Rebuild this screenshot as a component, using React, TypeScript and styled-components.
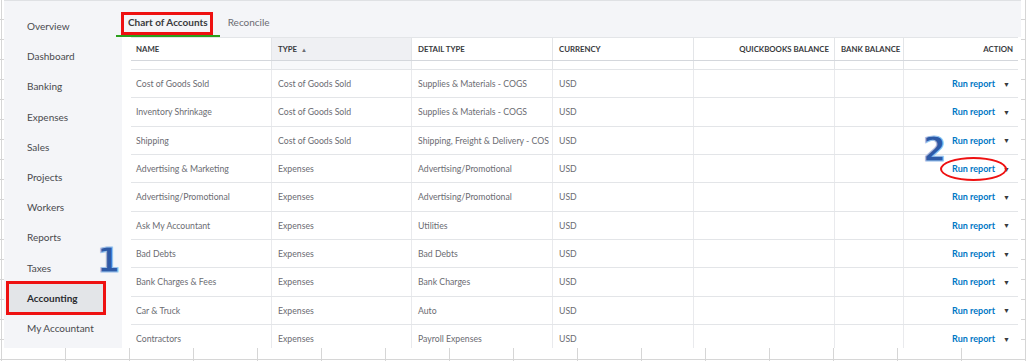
import React from 'react';
import styled, { createGlobalStyle } from 'styled-components';

const GlobalStyle = createGlobalStyle`
  body {
    margin: 0;
    background: #fff;
    font-family: Lato, "Noto Sans", sans-serif;
  }
`;

const navItems = [
  'Overview',
  'Dashboard',
  'Banking',
  'Expenses',
  'Sales',
  'Projects',
  'Workers',
  'Reports',
  'Taxes',
  'Accounting',
  'My Accountant',
];

const rows = [
  ['Cost of Goods Sold', 'Cost of Goods Sold', 'Supplies & Materials - COGS'],
  ['Inventory Shrinkage', 'Cost of Goods Sold', 'Supplies & Materials - COGS'],
  ['Shipping', 'Cost of Goods Sold', 'Shipping, Freight & Delivery - COS'],
  ['Advertising & Marketing', 'Expenses', 'Advertising/Promotional'],
  ['Advertising/Promotional', 'Expenses', 'Advertising/Promotional'],
  ['Ask My Accountant', 'Expenses', 'Utilities'],
  ['Bad Debts', 'Expenses', 'Bad Debts'],
  ['Bank Charges & Fees', 'Expenses', 'Bank Charges'],
  ['Car & Truck', 'Expenses', 'Auto'],
  ['Contractors', 'Expenses', 'Payroll Expenses'],
];

const COLS = '140px 140px 141px 141px 141px 69px 115px';

// excel sheet behind the pasted screenshot
const Sheet = styled.div`
  position: relative;
  width: 1026px;
  height: 361px;
  overflow: hidden;
  background-color: #fff;
  background-image: linear-gradient(to right, #d6d6d6 1px, transparent 1px),
    linear-gradient(to bottom, #d6d6d6 1px, transparent 1px);
  background-size: 64px 20px;
  background-position: 1px -1px;
`;

const Shot = styled.div`
  position: relative;
  display: flex;
  margin-left: 4px;
  width: 1017px;
  height: 348px;
  background: #fff;
  border-top: 1px solid #dfe1e4;
  box-sizing: border-box;
  overflow: hidden;
`;

const Sidebar = styled.nav`
  width: 118px;
  flex-shrink: 0;
  background: #f4f5f8;
  padding-top: 10px;
  box-sizing: border-box;
`;

const NavItem = styled.div<{ $active?: boolean }>`
  display: flex;
  align-items: center;
  height: 30.2px;
  margin: 0 ${(p) => (p.$active ? '16px' : '0')} 0 ${(p) => (p.$active ? '5px' : '0')};
  padding-left: ${(p) => (p.$active ? '18px' : '23px')};
  background: ${(p) => (p.$active ? '#e3e5e8' : 'transparent')};
  font-size: 10px;
  font-weight: ${(p) => (p.$active ? 700 : 400)};
  color: ${(p) => (p.$active ? '#2b2c2f' : '#494a4e')};
`;

const Main = styled.div`
  flex: 1;
  display: flex;
  flex-direction: column;
  min-width: 0;
`;

const TabBar = styled.div`
  display: flex;
  align-items: flex-end;
  flex-shrink: 0;
  height: 36px;
  background: #f4f5f8;
`;

const Tab = styled.div<{ $active?: boolean }>`
  display: flex;
  align-items: center;
  height: 28px;
  margin-left: ${(p) => (p.$active ? '-6px' : '0')};
  padding: 0 ${(p) => (p.$active ? '12px' : '8px')};
  box-sizing: border-box;
  border-bottom: 2px solid ${(p) => (p.$active ? '#2ca01c' : 'transparent')};
  font-size: 10px;
  font-weight: ${(p) => (p.$active ? 700 : 400)};
  color: ${(p) => (p.$active ? '#393a3d' : '#6b6c72')};
`;

const Table = styled.div`
  flex-shrink: 0;
  margin-left: 9px;
  width: 887px;
  background: #fff;
`;

const HeaderRow = styled.div`
  display: grid;
  grid-template-columns: ${COLS};
  height: 24px;
  border-top: 1px solid #e3e5e8;
  border-bottom: 1px solid #d4d7dc;
  box-sizing: border-box;
`;

const HeadCell = styled.div<{ $right?: boolean; $sorted?: boolean; $first?: boolean }>`
  display: flex;
  align-items: center;
  justify-content: ${(p) => (p.$right ? 'flex-end' : 'flex-start')};
  gap: 4px;
  padding: 0 ${(p) => (p.$right ? '5px' : '6px')} 0 ${(p) => (p.$first ? '5px' : '6px')};
  border-left: ${(p) => (p.$first ? 'none' : '1px solid #e3e5e8')};
  background: ${(p) => (p.$sorted ? '#eff0f3' : '#fff')};
  font-size: 7.8px;
  font-weight: 700;
  color: #393a3d;
  white-space: nowrap;
`;

const SortArrow = styled.span`
  font-size: 6px;
  color: #6b6c72;
`;

const Spacer = styled.div`
  display: grid;
  grid-template-columns: ${COLS};
  height: 9px;
  border-bottom: 1px solid #e3e5e8;
  box-sizing: border-box;
`;

const SpacerCell = styled.div<{ $sorted?: boolean; $first?: boolean }>`
  border-left: ${(p) => (p.$first ? 'none' : '1px solid #e3e5e8')};
  background: ${(p) => (p.$sorted ? '#f7f8fa' : '#fff')};
`;

const Row = styled.div`
  display: grid;
  grid-template-columns: ${COLS};
  height: 28.33px;
  border-bottom: 1px solid #e3e5e8;
  box-sizing: border-box;
`;

const Cell = styled.div<{ $right?: boolean; $first?: boolean }>`
  display: flex;
  align-items: center;
  justify-content: ${(p) => (p.$right ? 'flex-end' : 'flex-start')};
  padding: 0 ${(p) => (p.$right ? '6px' : '2px')} 0 ${(p) => (p.$first ? '5px' : '6px')};
  border-left: ${(p) => (p.$first ? 'none' : '1px solid #e9eaed')};
  font-size: 8.7px;
  color: #6b6c72;
  white-space: nowrap;
  overflow: hidden;
`;

const RunReport = styled.span`
  font-size: 9px;
  font-weight: 700;
  color: #0077c5;
`;

const Caret = styled.span`
  margin-left: 8px;
  margin-right: 2px;
  font-size: 7px;
  color: #393a3d;
`;

// red markup drawn over the screenshot
const RedBox = styled.div<{ $x: number; $y: number; $w: number; $h: number }>`
  position: absolute;
  left: ${(p) => p.$x}px;
  top: ${(p) => p.$y}px;
  width: ${(p) => p.$w}px;
  height: ${(p) => p.$h}px;
  border: 3px solid #ee1111;
  box-sizing: border-box;
  pointer-events: none;
`;

const RedOval = styled(RedBox)`
  border-width: 2.5px;
  border-radius: 50%;
`;

const Badge = styled.div<{ $x: number; $y: number }>`
  position: absolute;
  left: ${(p) => p.$x}px;
  top: ${(p) => p.$y}px;
  font-family: "DejaVu Sans", sans-serif;
  font-weight: 700;
  font-size: 33px;
  line-height: 1;
  color: #2e5aa6;
  -webkit-text-stroke: 1px #9cc2ec;
  text-shadow: 0 0 1px #c4dcf5;
`;

export default function App() {
  return (
    <>
      <GlobalStyle />
      <Sheet>
        <Shot>
          <Sidebar>
            {navItems.map((n) => (
              <NavItem key={n} $active={n === 'Accounting'}>
                {n}
              </NavItem>
            ))}
          </Sidebar>
          <Main>
            <TabBar>
              <Tab $active>Chart of Accounts</Tab>
              <Tab>Reconcile</Tab>
            </TabBar>
            <Table>
              <HeaderRow>
                <HeadCell $first>NAME</HeadCell>
                <HeadCell $sorted>
                  TYPE <SortArrow>▲</SortArrow>
                </HeadCell>
                <HeadCell>DETAIL TYPE</HeadCell>
                <HeadCell>CURRENCY</HeadCell>
                <HeadCell $right>QUICKBOOKS BALANCE</HeadCell>
                <HeadCell>BANK BALANCE</HeadCell>
                <HeadCell $right>ACTION</HeadCell>
              </HeaderRow>
              <Spacer>
                <SpacerCell $first />
                <SpacerCell $sorted />
                <SpacerCell />
                <SpacerCell />
                <SpacerCell />
                <SpacerCell />
                <SpacerCell />
              </Spacer>
              {rows.map(([name, type, detail]) => (
                <Row key={name}>
                  <Cell $first>{name}</Cell>
                  <Cell>{type}</Cell>
                  <Cell>{detail}</Cell>
                  <Cell>USD</Cell>
                  <Cell />
                  <Cell />
                  <Cell $right>
                    <RunReport>Run report</RunReport>
                    <Caret>▼</Caret>
                  </Cell>
                </Row>
              ))}
            </Table>
          </Main>
          <RedBox $x={117} $y={11} $w={92} $h={23} />
          <RedBox $x={2} $y={280} $w={100} $h={34} />
          <RedOval $x={936} $y={156} $w={67} $h={24} />
          <Badge $x={93} $y={243}>1</Badge>
          <Badge $x={919} $y={132}>2</Badge>
        </Shot>
      </Sheet>
    </>
  );
}
